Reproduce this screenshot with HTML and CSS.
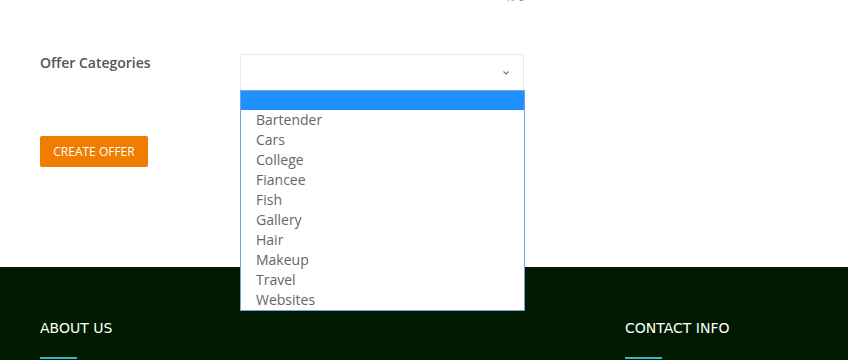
FILE: index.html
```html
<!DOCTYPE html>
<html>
<head>
<meta charset="utf-8">
<link rel="stylesheet" href="styles.css">
</head>
<body>
<div class="page">
  <div class="top-clip"><span class="top-note">%&nbsp;0</span></div>
  <div class="content">
    <div class="form-row">
      <label class="label">Offer Categories</label>
      <div class="select-wrap">
        <div class="select">
          <svg class="chev" width="8" height="6" viewBox="0 0 8 6"><path d="M1.5 1.5 L4 4 L6.5 1.5" fill="none" stroke="#777" stroke-width="1.1"/></svg>
        </div>
        <ul class="listbox">
          <li class="opt selected">&nbsp;</li>
          <li class="opt">Bartender</li>
          <li class="opt">Cars</li>
          <li class="opt">College</li>
          <li class="opt">Fiancee</li>
          <li class="opt">Fish</li>
          <li class="opt">Gallery</li>
          <li class="opt">Hair</li>
          <li class="opt">Makeup</li>
          <li class="opt">Travel</li>
          <li class="opt">Websites</li>
        </ul>
      </div>
    </div>
    <button class="btn">CREATE OFFER</button>
  </div>
  <footer class="footer">
    <div class="fcol">
      <h3 class="fhead">ABOUT US</h3>
      <div class="fbar"></div>
    </div>
    <div class="fcol right">
      <h3 class="fhead">CONTACT INFO</h3>
      <div class="fbar"></div>
    </div>
  </footer>
</div>
</body>
</html>
```
FILE: styles.css
```css
html, body {
  margin: 0;
  padding: 0;
  background: #fff;
}
.page {
  width: 848px;
  height: 360px;
  overflow: hidden;
  position: relative;
}
.top-clip {
  height: 4px;
  overflow: hidden;
  position: relative;
}
.top-note {
  position: absolute;
  left: 505px;
  top: -9px;
  font-family: "Open Sans", sans-serif;
  font-size: 12px;
  line-height: 12px;
  color: #7a9ab8;
}
.content {
  padding: 50px 40px 0 40px;
  height: 213px;
}
.form-row {
  display: flex;
  align-items: flex-start;
}
.label {
  width: 200px;
  font-family: "Open Sans", sans-serif;
  font-weight: 600;
  font-size: 14px;
  color: #555;
  line-height: 18px;
}
.select-wrap {
  position: relative;
  width: 285px;
}
.select {
  box-sizing: border-box;
  height: 37px;
  width: 284px;
  border: 1px solid #e8e8e8;
  border-radius: 2px;
  background: #fff;
  display: flex;
  align-items: center;
  justify-content: flex-end;
  padding-right: 13px;
}
.chev {
  display: block;
  margin-top: 1px;
}
.listbox {
  position: absolute;
  left: 0;
  top: 36px;
  width: 285px;
  box-sizing: border-box;
  margin: 0;
  padding: 0;
  list-style: none;
  background: #fff;
  border: 1px solid #7a9fe4;
  z-index: 10;
}
.opt {
  font-family: "Open Sans", sans-serif;
  font-size: 14px;
  line-height: 20px;
  height: 20px;
  color: #666;
  padding-left: 15px;
}
.opt.selected {
  background: #1e90ff;
  height: 19px;
}
.btn {
  margin-top: 45px;
  background: #f07c00;
  color: #fff;
  border: none;
  border-radius: 2px;
  font-family: "Open Sans", sans-serif;
  font-size: 12px;
  height: 31px;
  width: 108px;
  padding: 0;
  display: block;
  cursor: pointer;
}
.footer {
  background: #001a00;
  height: 93px;
  display: flex;
  justify-content: space-between;
  padding: 0 40px;
}
.fcol {
  padding-top: 52px;
  width: 183px;
}
.fhead {
  margin: 0;
  font-family: "DejaVu Sans", Verdana, sans-serif;
  font-weight: normal;
  font-size: 14px;
  line-height: 18px;
  color: #fff;
}
.fbar {
  margin-top: 20px;
  width: 37px;
  height: 2px;
  background: #3fb3c8;
}
```
